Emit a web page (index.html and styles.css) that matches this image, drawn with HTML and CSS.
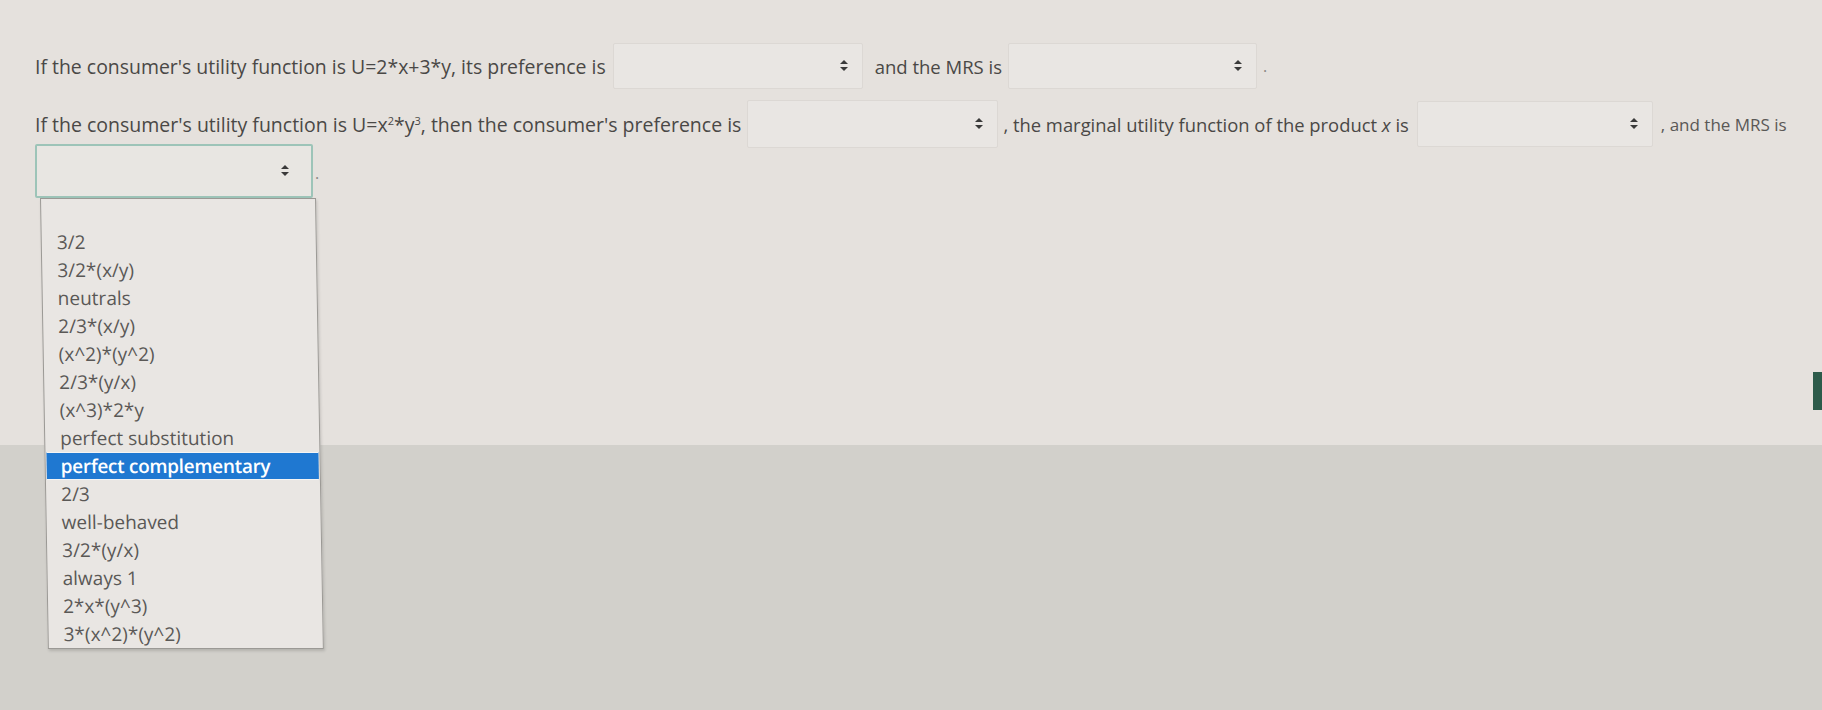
FILE: index.html
```html
<!DOCTYPE html>
<html>
<head>
<meta charset="utf-8">
<link rel="stylesheet" href="styles.css">
</head>
<body>
<div class="panel">
  <div class="row row1">
    <span class="txt t1">If the consumer's utility function is U=2*x+3*y, its preference is</span>
    <div class="sel sel-a"><span class="arrow"><svg width="8" height="11" viewBox="0 0 8 11"><path d="M4 0L8 4H0z M4 11L0 7H8z" fill="#3a3a3a"/></svg></span></div>
    <span class="txt t2">and the MRS is</span>
    <div class="sel sel-b"><span class="arrow"><svg width="8" height="11" viewBox="0 0 8 11"><path d="M4 0L8 4H0z M4 11L0 7H8z" fill="#3a3a3a"/></svg></span></div>
    <span class="dot">.</span>
  </div>
  <div class="row row2">
    <span class="txt t3">If the consumer's utility function is U=x<sup>2</sup>*y<sup>3</sup>, then the consumer's preference is</span>
    <div class="sel sel-c"><span class="arrow"><svg width="8" height="11" viewBox="0 0 8 11"><path d="M4 0L8 4H0z M4 11L0 7H8z" fill="#3a3a3a"/></svg></span></div>
    <span class="txt t4">, the marginal utility function of the product <i>x</i> is</span>
    <div class="sel sel-d"><span class="arrow"><svg width="8" height="11" viewBox="0 0 8 11"><path d="M4 0L8 4H0z M4 11L0 7H8z" fill="#3a3a3a"/></svg></span></div>
    <span class="txt t5">, and the MRS is</span>
  </div>
  <div class="row row3">
    <div class="sel sel-e focus"><span class="arrow"><svg width="8" height="11" viewBox="0 0 8 11"><path d="M4 0L8 4H0z M4 11L0 7H8z" fill="#3a3a3a"/></svg></span>
      <ul class="menu">
        <li>&nbsp;</li>
        <li>3/2</li>
        <li>3/2*(x/y)</li>
        <li>neutrals</li>
        <li>2/3*(x/y)</li>
        <li>(x^2)*(y^2)</li>
        <li>2/3*(y/x)</li>
        <li>(x^3)*2*y</li>
        <li>perfect substitution</li>
        <li class="hl">perfect complementary</li>
        <li>2/3</li>
        <li>well-behaved</li>
        <li>3/2*(y/x)</li>
        <li>always 1</li>
        <li>2*x*(y^3)</li>
        <li>3*(x^2)*(y^2)</li>
      </ul>
    </div>
    <span class="dot">.</span>
  </div>
  <div class="tab"></div>
</div>
</body>
</html>
```

FILE: styles.css
```css
html, body {
  margin: 0;
  padding: 0;
}
body {
  background: #d2d0cb;
  font-family: "Open Sans", "Liberation Sans", sans-serif;
  color: #4a4846;
  width: 1822px;
  height: 710px;
  overflow: hidden;
}
.panel {
  position: relative;
  height: 445px;
  background: #e5e1dd;
  padding: 43px 0 0 35px;
  box-sizing: border-box;
}
.row {
  display: flex;
  align-items: center;
  white-space: nowrap;
}
.txt {
  font-size: 19px;
}
.t1 { font-size: 19.45px; margin-right: 7px; }
.t2 { font-size: 18.5px; }
.t3 { font-size: 19.5px; margin-right: 6px; }
.t4 { font-size: 18.4px; }
.t5 { font-size: 17px; color: #5a5856; }
.txt sup {
  font-size: 11px;
  vertical-align: 7px;
  line-height: 0;
}
.dot {
  font-size: 16px;
  color: #8a8884;
  margin-left: 6px;
}
.sel {
  position: relative;
  height: 46px;
  box-sizing: border-box;
  background: #e9e6e3;
  border: 1px solid #dcd8d4;
  border-radius: 2px;
}
.arrow {
  position: absolute;
  right: 14px;
  top: 50%;
  margin-top: -6px;
  height: 11px;
}
.arrow svg { display: block; }
.sel-a { width: 250px; margin-right: 12px; }
.sel-b { width: 249px; margin-left: 6px; }
.row2 { margin-top: 11px; }
.sel-c { width: 251px; height: 48px; margin-right: 5px; }
.sel-d { width: 236px; margin-left: 8px; margin-right: 8px; }
.row3 { margin-top: -4px; align-items: flex-end; }
.sel-e {
  width: 278px;
  height: 54px;
  border: 2px solid #9dc4b8;
  background: #e8e6e2;
}
.sel-e .arrow { right: 22px; }
.row3 .dot { margin-left: 2px; margin-bottom: 14px; }
.menu {
  position: absolute;
  left: 3px;
  top: 52px;
  width: 276px;
  margin: 0;
  padding: 1px 0 0 0;
  list-style: none;
  background: #e9e6e3;
  border: 1px solid #9b9995;
  box-sizing: border-box;
  box-shadow: 1px 2px 3px rgba(0,0,0,0.15);
  transform: skewX(1deg);
  transform-origin: top left;
  z-index: 5;
}
.menu li {
  height: 28px;
  line-height: 28px;
  padding-left: 15px;
  font-size: 19px;
  color: #5a5856;
}
.menu li.hl {
  background: #1f78d1;
  color: #ffffff;
  font-weight: 600;
  margin: 0 1px;
  padding-left: 14px;
  border-top: 1px solid #f4f4f4;
  border-bottom: 1px solid #f4f4f4;
  height: 26px;
  line-height: 26px;
  letter-spacing: -0.3px;
}
.tab {
  position: absolute;
  right: 0;
  top: 372px;
  width: 9px;
  height: 38px;
  background: #2d5b4a;
}
```
